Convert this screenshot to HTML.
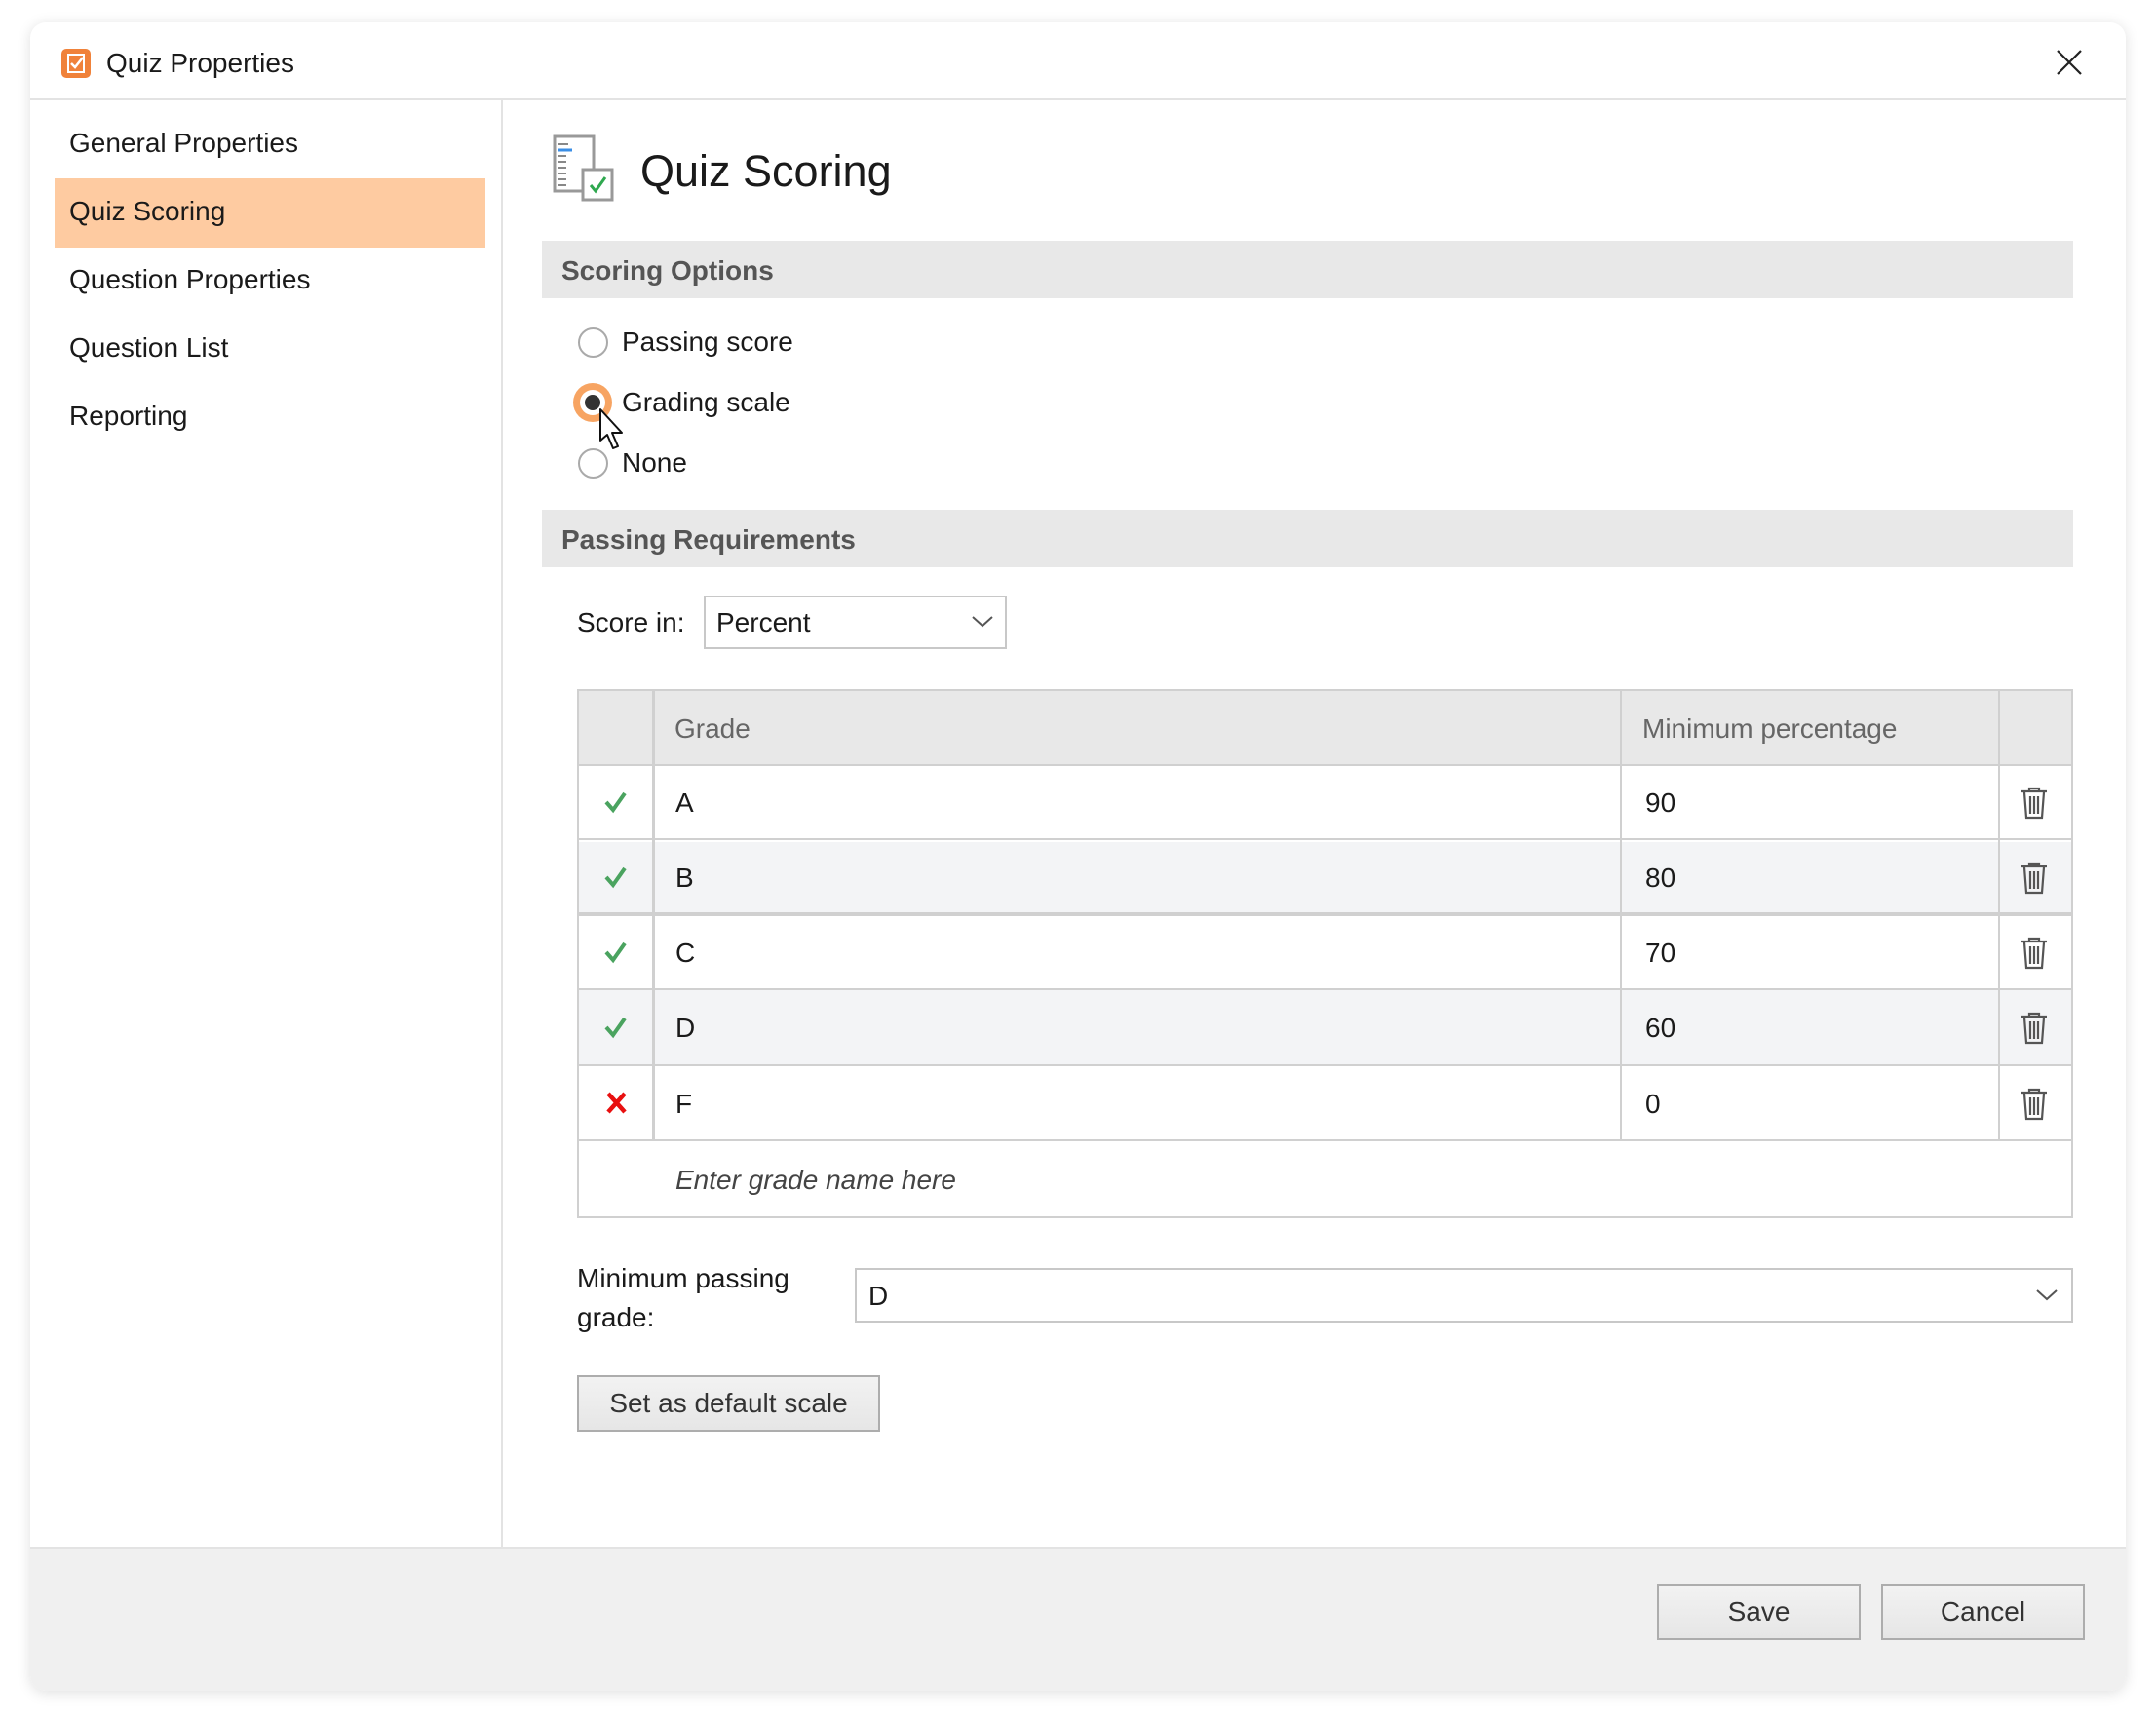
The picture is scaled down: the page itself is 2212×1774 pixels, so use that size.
<!DOCTYPE html>
<html><head><meta charset="utf-8"><style>
*{box-sizing:border-box;margin:0;padding:0}
body{width:2212px;height:1774px;background:#fff;font-family:"Liberation Sans",sans-serif;position:relative;overflow:hidden;color:#1a1a1a}
.a{position:absolute}
.win{left:31px;top:23px;width:2150px;height:1712px;border-radius:16px;background:#fff;box-shadow:0 2px 14px rgba(0,0,0,.13);overflow:hidden}
.t{font-size:28px;line-height:1;white-space:nowrap}
.bar{background:#e8e8e8;left:556px;width:1571px;height:59px}
.bar span{position:absolute;left:20px;top:15px;font-size:28px;font-weight:bold;color:#555}
.radio{width:31px;height:31px;border-radius:50%;border:2px solid #aaa;background:#fff}
.row{left:592px;width:1535px;border-bottom:2px solid #d0d0d0}
.btn{border:2px solid #adadad;background:linear-gradient(#f2f2f2,#e6e6e6);text-align:center;font-size:28px;color:#333}
</style></head><body>
<div class="a win"></div>
<div class="a" style="left:31px;top:101px;width:2150px;height:2px;background:#e3e3e3"></div>
<svg class="a" style="left:62px;top:49px" width="32" height="32" viewBox="0 0 32 32"><rect x="1" y="1" width="30" height="30" rx="5" fill="#f0823a"/><rect x="8" y="7" width="16" height="18" fill="none" stroke="#fff" stroke-width="2"/><path d="M11 16l4 4 8-10" fill="none" stroke="#fff" stroke-width="2.5"/></svg>
<div class="a t" style="left:109px;top:51px">Quiz Properties</div>
<svg class="a" style="left:2110px;top:51px" width="26" height="26" viewBox="0 0 26 26"><path d="M1 1L25 25M25 1L1 25" stroke="#222" stroke-width="2.2"/></svg>
<div class="a" style="left:514px;top:103px;width:2px;height:1484px;background:#e3e3e3"></div>
<div class="a" style="left:56px;top:183px;width:442px;height:71px;background:#fecba1"></div>
<div class="a t" style="left:71px;top:133px">General Properties</div>
<div class="a t" style="left:71px;top:203px">Quiz Scoring</div>
<div class="a t" style="left:71px;top:273px">Question Properties</div>
<div class="a t" style="left:71px;top:343px">Question List</div>
<div class="a t" style="left:71px;top:413px">Reporting</div>
<svg class="a" style="left:567px;top:138px" width="64" height="70" viewBox="0 0 64 70"><rect x="2" y="2" width="40" height="56" fill="#fff" stroke="#999" stroke-width="3"/><g stroke="#888" stroke-width="2"><path d="M6 10h10M6 22h8M6 28h8M6 34h8M6 40h8M6 46h8M6 52h8"/></g><path d="M6 16h14" stroke="#3a8ee6" stroke-width="3"/><rect x="31" y="36" width="30" height="31" fill="#fff" stroke="#999" stroke-width="3"/><path d="M39 52l5 6 10-14" fill="none" stroke="#2fa84f" stroke-width="3"/></svg>
<div class="a" style="left:657px;top:150px;font-size:45px;white-space:nowrap">Quiz Scoring</div>
<div class="a bar" style="top:247px"><span>Scoring Options</span></div>
<div class="a radio" style="left:593px;top:336px"></div>
<div class="a t" style="left:638px;top:337px">Passing score</div>
<div class="a" style="left:588px;top:393px;width:40px;height:40px;border-radius:50%;background:#f7a462"></div>
<div class="a" style="left:595px;top:400px;width:26px;height:26px;border-radius:50%;background:#fff"></div>
<div class="a" style="left:600px;top:405px;width:16px;height:16px;border-radius:50%;background:#333"></div>
<svg class="a" style="left:614px;top:418px" width="30" height="46" viewBox="0 0 30 46"><path d="M2 2L2 34L9 28L15 42L20 40L14 26L24 26Z" fill="#fff" stroke="#111" stroke-width="2" stroke-linejoin="round"/></svg>
<div class="a t" style="left:638px;top:399px">Grading scale</div>
<div class="a radio" style="left:593px;top:460px"></div>
<div class="a t" style="left:638px;top:461px">None</div>
<div class="a bar" style="top:523px"><span>Passing Requirements</span></div>
<div class="a t" style="left:592px;top:625px">Score in:</div>
<div class="a" style="left:722px;top:611px;width:311px;height:55px;border:2px solid #c8c8c8"></div>
<div class="a t" style="left:735px;top:625px">Percent</div>
<svg class="a" style="left:997px;top:631px" width="22" height="14" viewBox="0 0 22 14"><path d="M1 2l10 9 10-9" fill="none" stroke="#555" stroke-width="2"/></svg>
<div class="a" style="left:592px;top:707px;width:1535px;height:543px;border:2px solid #d0d0d0"></div>
<div class="a" style="left:594px;top:709px;width:1531px;height:77px;background:#e8e8e8;border-bottom:2px solid #d0d0d0"></div>
<div class="a" style="left:594px;top:864px;width:1531px;height:76px;background:#f3f4f6"></div>
<div class="a" style="left:594px;top:1016px;width:1531px;height:77px;background:#f3f4f6"></div>
<div class="a row" style="top:860px"></div>
<div class="a row" style="top:936px;border-bottom-width:4px"></div>
<div class="a row" style="top:1014px"></div>
<div class="a row" style="top:1092px"></div>
<div class="a row" style="top:1169px"></div>
<div class="a" style="left:669px;top:709px;width:3px;height:462px;background:#d0d0d0"></div>
<div class="a" style="left:1662px;top:709px;width:2px;height:462px;background:#d0d0d0"></div>
<div class="a" style="left:2050px;top:709px;width:2px;height:462px;background:#d0d0d0"></div>
<div class="a t" style="left:692px;top:734px;color:#666">Grade</div>
<div class="a t" style="left:1685px;top:734px;color:#666">Minimum percentage</div>
<div class="a t" style="left:693px;top:810px">A</div><div class="a t" style="left:1688px;top:810px">90</div>
<div class="a t" style="left:693px;top:887px">B</div><div class="a t" style="left:1688px;top:887px">80</div>
<div class="a t" style="left:693px;top:964px">C</div><div class="a t" style="left:1688px;top:964px">70</div>
<div class="a t" style="left:693px;top:1041px">D</div><div class="a t" style="left:1688px;top:1041px">60</div>
<div class="a t" style="left:693px;top:1119px">F</div><div class="a t" style="left:1688px;top:1119px">0</div>
<div class="a t" style="left:693px;top:1197px;font-style:italic;color:#444">Enter grade name here</div>
<svg class="a" style="left:0;top:0" width="2212" height="1774">
<defs><g id="ck"><path d="M0 10l7 8 12-17" fill="none" stroke="#4aa35f" stroke-width="4"/></g>
<g id="tr"><path d="M1 5h26M9 5V2h10v3M4 6l2 26h16l2-26M10 10v18M14 10v18M18 10v18" fill="none" stroke="#555" stroke-width="2.2"/></g></defs>
<use href="#ck" x="622" y="813"/><use href="#ck" x="622" y="890"/><use href="#ck" x="622" y="967"/><use href="#ck" x="622" y="1044"/>
<path d="M624 1122l17 19M641 1122l-17 19" stroke="#e81010" stroke-width="4.5"/>
<use href="#tr" x="2073" y="807"/><use href="#tr" x="2073" y="884"/><use href="#tr" x="2073" y="961"/><use href="#tr" x="2073" y="1038"/><use href="#tr" x="2073" y="1116"/>
</svg>
<div class="a t" style="left:592px;top:1298px">Minimum passing</div>
<div class="a t" style="left:592px;top:1338px">grade:</div>
<div class="a" style="left:877px;top:1301px;width:1250px;height:56px;border:2px solid #c8c8c8"></div>
<div class="a t" style="left:891px;top:1316px">D</div>
<svg class="a" style="left:2089px;top:1322px" width="22" height="14" viewBox="0 0 22 14"><path d="M1 2l10 9 10-9" fill="none" stroke="#555" stroke-width="2"/></svg>
<div class="a btn" style="left:592px;top:1411px;width:311px;height:58px;line-height:54px">Set as default scale</div>
<div class="a" style="left:31px;top:1587px;width:2150px;height:148px;background:#f0f0f0;border-top:2px solid #e3e3e3;border-radius:0 0 16px 16px"></div>
<div class="a btn" style="left:1700px;top:1625px;width:209px;height:58px;line-height:54px">Save</div>
<div class="a btn" style="left:1930px;top:1625px;width:209px;height:58px;line-height:54px">Cancel</div>
</body></html>
